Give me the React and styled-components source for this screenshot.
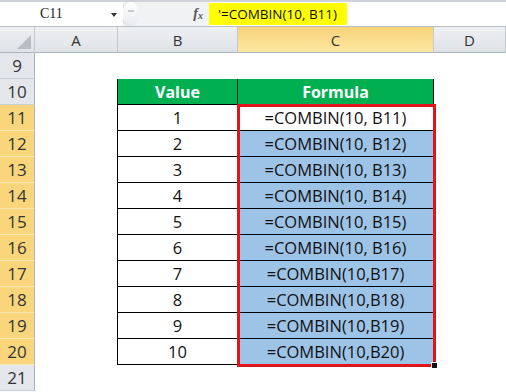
import React from "react";
import styled, { createGlobalStyle, css } from "styled-components";

const Global = createGlobalStyle`
  html, body { margin: 0; padding: 0; background: #fff; overflow: hidden; }
  #root { width: 506px; height: 392px; overflow: hidden; }
`;

const Page = styled.div`
  width: 506px;
  height: 392px;
  display: flex;
  flex-direction: column;
  font-family: "Open Sans", "Liberation Sans", sans-serif;
  color: #222;
`;

const FormulaBar = styled.div`
  height: 27px;
  box-sizing: border-box;
  border-top: 2px solid #cfd3d9;
  border-bottom: 1px solid #b9bec6;
  display: flex;
  align-items: stretch;
  background: #f1f2f4;
`;

const NameBox = styled.div`
  width: 123px;
  background: #fff;
  display: flex;
  align-items: center;
  position: relative;
  font-family: "Liberation Serif", serif;
  font-size: 14px;
  color: #222;
  padding-left: 40px;
  box-sizing: border-box;
`;

const DropArrow = styled.span`
  position: absolute;
  right: 6px;
  top: 11px;
  width: 0;
  height: 0;
  border-left: 3px solid transparent;
  border-right: 3px solid transparent;
  border-top: 4px solid #333;
`;

const Dimple = styled.div`
  width: 17px;
  margin-left: -2px;
  border-radius: 50%;
  border-left: 1px solid #c5c9cf;
  background: linear-gradient(#ffffff, #e8eaee);
  display: flex;
  align-items: center;
  justify-content: center;
  &::after {
    content: "";
    width: 6px;
    height: 2px;
    background: #c9ccd1;
    margin-bottom: 6px;
  }
`;

const FxArea = styled.div`
  width: 70px;
  display: flex;
  align-items: center;
  justify-content: flex-end;
  padding-right: 6px;
  box-sizing: border-box;
  font-family: "Liberation Serif", serif;
  color: #555;
  font-size: 14px;
  i { font-weight: bold; }
  span { font-size: 10px; font-style: italic; font-weight: bold; margin-top: 3px; }
`;

const FormulaInput = styled.div`
  flex: 1;
  background: #fff;
  display: flex;
  align-items: center;
`;

const Highlight = styled.span`
  background: #ffff00;
  height: 22px;
  display: flex;
  align-items: center;
  padding: 0 10px 0 9px;
  font-size: 13.5px;
  color: #111;
`;

const Sheet = styled.div`
  display: grid;
  grid-template-columns: 35px 83px 120px 196px 1fr;
  grid-template-rows: repeat(14, 26px);
  position: relative;
`;

const ColHead = styled.div`
  grid-row: 1;
  box-sizing: border-box;
  display: flex;
  align-items: center;
  justify-content: center;
  font-size: 15px;
  color: #333;
  border-right: 1px solid #c4c9d0;
  border-bottom: 1px solid #aeb4bc;
  background: ${(p) =>
    p.$active
      ? "linear-gradient(#f8d37a, #fde7a2)"
      : "linear-gradient(#eef0f3, #dfe2e7)"};
`;

const Corner = styled(ColHead)`
  position: relative;
  &::after {
    content: "";
    position: absolute;
    right: 3px;
    bottom: 3px;
    width: 0;
    height: 0;
    border-left: 14px solid transparent;
    border-bottom: 14px solid #b8bcc3;
  }
`;

const RowHead = styled.div`
  grid-column: 1;
  box-sizing: border-box;
  display: flex;
  align-items: center;
  justify-content: center;
  font-size: 17px;
  color: #333;
  border-right: 1px solid #aeb4bc;
  border-bottom: 1px solid ${(p) => (p.$active ? "#fbe7b0" : "#c9ced5")};
  background: ${(p) => (p.$active ? "#f9d67c" : "#e3e6ea")};
`;

const Cell = styled.div`
  box-sizing: border-box;
  display: flex;
  align-items: center;
  justify-content: center;
  font-size: 16.5px;
  color: #111;
  border-bottom: 1px solid #000;
  border-right: 1px solid #000;
  ${(p) => p.$first && css`border-left: 1px solid #000; margin-left: -1px;`}
  ${(p) =>
    p.$head &&
    css`
      background: #00b050;
      color: #fff;
      font-weight: bold;
      font-size: 16px;
    `}
  ${(p) => p.$blue && css`background: #9dc3e6;`}
`;

const Selection = styled.div`
  grid-column: 4;
  grid-row: 4 / 14;
  border: 3px solid #e0141a;
  margin: -1px -2px -2px -1px;
  position: relative;
  pointer-events: none;
  &::after {
    content: "";
    position: absolute;
    right: -5px;
    bottom: -5px;
    width: 5px;
    height: 5px;
    background: #111;
    border: 1px solid #fff;
  }
`;

const formulas = [
  "=COMBIN(10, B11)",
  "=COMBIN(10, B12)",
  "=COMBIN(10, B13)",
  "=COMBIN(10, B14)",
  "=COMBIN(10, B15)",
  "=COMBIN(10, B16)",
  "=COMBIN(10,B17)",
  "=COMBIN(10,B18)",
  "=COMBIN(10,B19)",
  "=COMBIN(10,B20)",
];

export default function App() {
  const rows = [9, 10, 11, 12, 13, 14, 15, 16, 17, 18, 19, 20, 21];
  return (
    <Page>
      <Global />
      <FormulaBar>
        <NameBox>
          C11
          <DropArrow />
        </NameBox>
        <Dimple />
        <FxArea>
          <i>f</i>
          <span>x</span>
        </FxArea>
        <FormulaInput>
          <Highlight>'=COMBIN(10, B11)</Highlight>
        </FormulaInput>
      </FormulaBar>
      <Sheet>
        <Corner style={{ gridColumn: 1 }} />
        {["A", "B", "C", "D"].map((c, i) => (
          <ColHead key={c} $active={c === "C"} style={{ gridColumn: i + 2 }}>
            {c}
          </ColHead>
        ))}
        {rows.map((r, i) => (
          <RowHead key={r} $active={r >= 11 && r <= 20} style={{ gridRow: i + 2 }}>
            {r}
          </RowHead>
        ))}
        <Cell $head $first style={{ gridColumn: 3, gridRow: 3 }}>Value</Cell>
        <Cell $head style={{ gridColumn: 4, gridRow: 3 }}>Formula</Cell>
        {formulas.map((f, i) => (
          <React.Fragment key={f}>
            <Cell $first style={{ gridColumn: 3, gridRow: i + 4 }}>{i + 1}</Cell>
            <Cell $blue={i > 0} style={{ gridColumn: 4, gridRow: i + 4 }}>{f}</Cell>
          </React.Fragment>
        ))}
        <Selection />
      </Sheet>
    </Page>
  );
}
